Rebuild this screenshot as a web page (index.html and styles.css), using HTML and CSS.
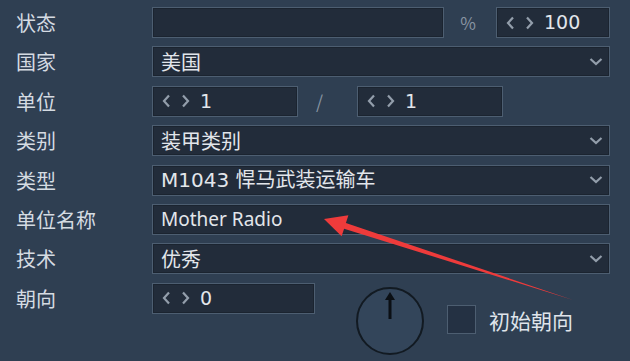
FILE: index.html
```html
<!DOCTYPE html>
<html lang="zh-CN">
<head>
    <meta charset="UTF-8">
    <title>单位属性</title>
    <link rel="stylesheet" href="styles.css">
</head>
<body>
    <div class="panel">
        <div class="row">
            <div class="label">状态</div>
            <div class="fields">
                <div class="box grow"></div>
                <div class="sep">%</div>
                <div class="box spin w114">
                    <svg class="arrows" width="28" height="14" viewBox="0 0 28 14"><polyline points="7,1.5 2,7 7,12.5"/><polyline points="21,1.5 26,7 21,12.5"/></svg>
                    <span class="value num">100</span>
                </div>
            </div>
        </div>
        <div class="row">
            <div class="label">国家</div>
            <div class="fields">
                <div class="box grow select"><span class="value">美国</span><svg class="chev" width="14" height="8" viewBox="0 0 14 8"><polyline points="1.5,1 7,6 12.5,1"/></svg></div>
            </div>
        </div>
        <div class="row">
            <div class="label">单位</div>
            <div class="fields">
                <div class="box spin w146">
                    <svg class="arrows" width="28" height="14" viewBox="0 0 28 14"><polyline points="7,1.5 2,7 7,12.5"/><polyline points="21,1.5 26,7 21,12.5"/></svg>
                    <span class="value num">1</span>
                </div>
                <div class="sep slash">/</div>
                <div class="box spin w146">
                    <svg class="arrows" width="28" height="14" viewBox="0 0 28 14"><polyline points="7,1.5 2,7 7,12.5"/><polyline points="21,1.5 26,7 21,12.5"/></svg>
                    <span class="value num">1</span>
                </div>
            </div>
        </div>
        <div class="row">
            <div class="label">类别</div>
            <div class="fields">
                <div class="box grow select"><span class="value">装甲类别</span><svg class="chev" width="14" height="8" viewBox="0 0 14 8"><polyline points="1.5,1 7,6 12.5,1"/></svg></div>
            </div>
        </div>
        <div class="row">
            <div class="label">类型</div>
            <div class="fields">
                <div class="box grow select"><span class="value num">M1043 悍马武装运输车</span><svg class="chev" width="14" height="8" viewBox="0 0 14 8"><polyline points="1.5,1 7,6 12.5,1"/></svg></div>
            </div>
        </div>
        <div class="row">
            <div class="label">单位名称</div>
            <div class="fields">
                <div class="box grow"><span class="value name">Mother Radio</span></div>
            </div>
        </div>
        <div class="row">
            <div class="label">技术</div>
            <div class="fields">
                <div class="box grow select"><span class="value">优秀</span><svg class="chev" width="14" height="8" viewBox="0 0 14 8"><polyline points="1.5,1 7,6 12.5,1"/></svg></div>
            </div>
        </div>
        <div class="row last">
            <div class="label">朝向</div>
            <div class="fields">
                <div class="box spin w163">
                    <svg class="arrows" width="28" height="14" viewBox="0 0 28 14"><polyline points="7,1.5 2,7 7,12.5"/><polyline points="21,1.5 26,7 21,12.5"/></svg>
                    <span class="value num">0</span>
                </div>
                <div class="dial">
                    <svg width="70" height="70" viewBox="0 0 70 70">
                        <circle cx="35" cy="35" r="33" class="dial-ring"/>
                        <line x1="35" y1="33" x2="35" y2="13" class="needle"/>
                        <polygon points="35,6 30,14 40,14" class="needle-head"/>
                    </svg>
                </div>
                <label class="check">
                    <span class="checkbox"></span>
                    <span class="check-text">初始朝向</span>
                </label>
            </div>
        </div>
    </div>
    <svg class="annotation" width="630" height="361" viewBox="0 0 630 361">
        <polygon points="324,219 348.4,215.3 345.9,222.9 573,300 344.1,228.7 341.6,236.3" fill="#ee3b3b"/>
    </svg>
</body>
</html>
```

FILE: styles.css
```css
body {
    margin: 0;
    width: 630px;
    height: 361px;
    overflow: hidden;
    background: #2f3f52;
    font-family: 'Noto Sans CJK SC', 'Noto Sans', sans-serif;
    color: #dfe4ea;
    position: relative;
}
.panel {
    padding: 7px 20px 0 16px;
    display: flex;
    flex-direction: column;
    gap: 8.4px;
}
.row {
    display: flex;
    height: 31px;
    align-items: center;
}
.row.last {
    align-items: flex-start;
    height: 72px;
}
.label {
    width: 136px;
    font-size: 20px;
    color: #d5dbe2;
    line-height: 31px;
}
.fields {
    flex: 1;
    display: flex;
    align-items: flex-start;
    height: 100%;
}
.box {
    box-sizing: border-box;
    height: 31px;
    background: #222c3a;
    border: 1px solid #4d5e71;
    box-shadow: inset 0 0 0 1px #1b2430;
    display: flex;
    align-items: center;
    padding: 0 8px;
}
.grow {
    flex: 1;
}
.w114 { width: 114px; }
.w146 { width: 146px; }
.w163 { width: 163px; }
.value {
    font-size: 20px;
    color: #e2e6eb;
    line-height: 1;
    white-space: nowrap;
}
.value.num {
    font-family: 'DejaVu Sans', 'Noto Sans CJK SC', sans-serif;
}
.spin .value.num {
    font-size: 19px;
}
.value.name {
    font-size: 19px;
    font-family: 'Noto Sans', 'Noto Sans CJK SC', sans-serif;
}
.select {
    justify-content: space-between;
}
.chev polyline,
.arrows polyline {
    fill: none;
    stroke: #939eab;
    stroke-width: 2.2;
}
.chev {
    margin-right: -2px;
}
.spin .arrows {
    margin-left: 1px;
    margin-right: 10px;
}
.sep {
    width: 52px;
    text-align: center;
    font-size: 17px;
    color: #8793a1;
    line-height: 31px;
    padding-right: 4px;
    box-sizing: border-box;
}
.sep.slash {
    width: 59px;
    font-size: 18px;
    padding-right: 16px;
}
.dial {
    margin-left: 40px;
    margin-top: 3px;
}
.dial-ring {
    fill: #33455a;
    stroke: #121a22;
    stroke-width: 2;
}
.needle {
    stroke: #0b0f14;
    stroke-width: 3;
}
.needle-head {
    fill: #0b0f14;
}
.check {
    display: flex;
    align-items: center;
    margin-left: 22px;
    margin-top: 22px;
    gap: 13px;
}
.checkbox {
    width: 29px;
    height: 29px;
    box-sizing: border-box;
    background: #243143;
    border: 1px solid #4d5e71;
}
.check-text {
    font-size: 21px;
    color: #dfe4ea;
}
.annotation {
    position: absolute;
    left: 0;
    top: 0;
    pointer-events: none;
}
```
